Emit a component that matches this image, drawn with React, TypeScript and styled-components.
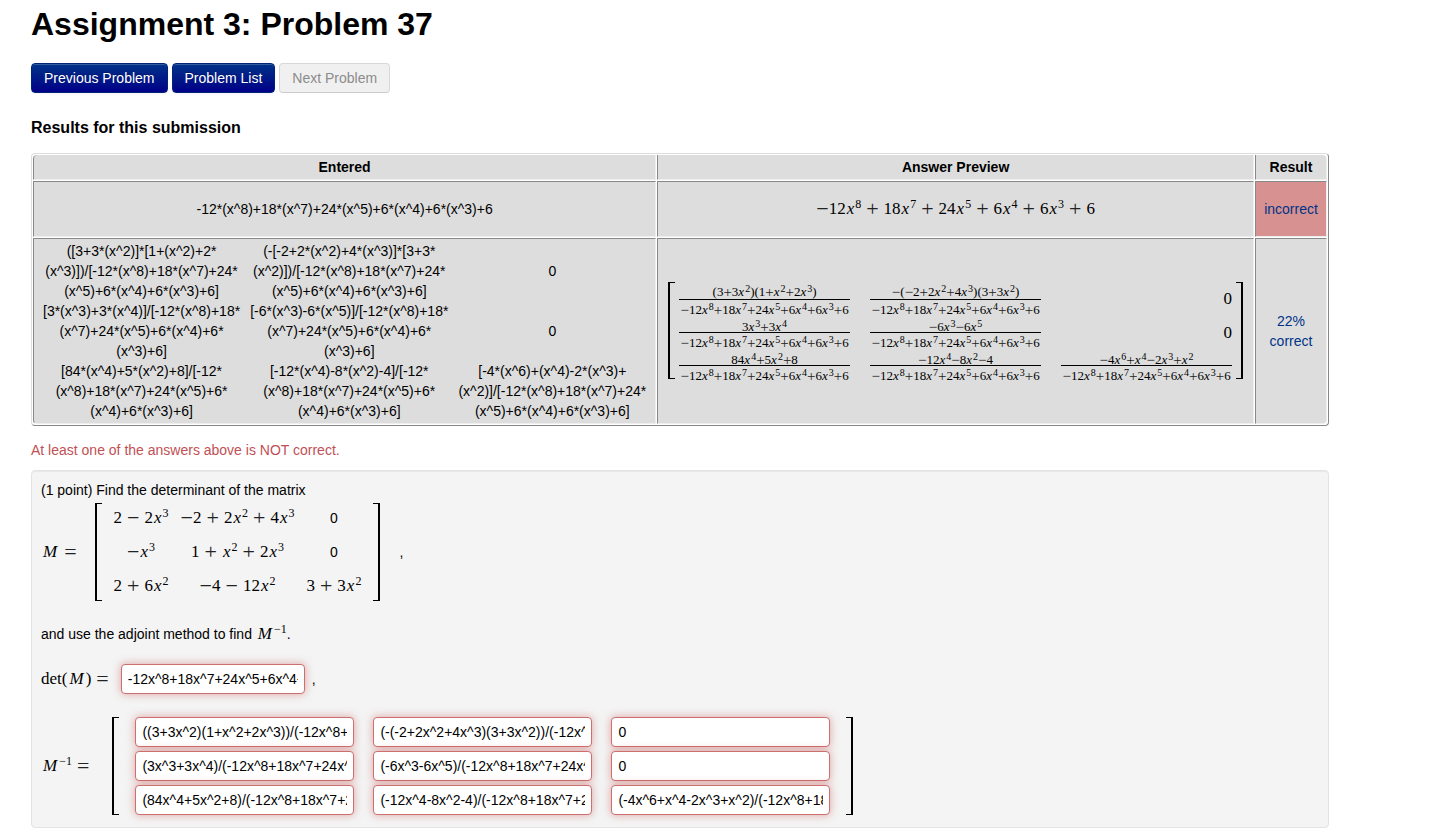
import React, { Fragment } from "react";
import styled, { createGlobalStyle } from "styled-components";

const GlobalStyle = createGlobalStyle`
  * { box-sizing: border-box; }
  body {
    margin: 0;
    background: #fff;
    color: #000;
    font: 14px/20px "Liberation Sans", Arial, Helvetica, sans-serif;
  }
`;

const Page = styled.main`
  padding: 4px 111px 12px 31px;
`;

const Title = styled.h1`
  margin: 0;
  font-size: 32px;
  line-height: 40px;
`;

const ButtonBar = styled.nav`
  display: flex;
  gap: 4px;
  margin: 19px 0 25px;
`;

const NavButton = styled.button`
  height: 30px;
  padding: 4px 12px;
  border: 1px solid #002277;
  border-radius: 4px;
  background: linear-gradient(#003388, #000088);
  box-shadow: inset 0 1px 0 rgba(255, 255, 255, 0.2), 0 1px 2px rgba(0, 0, 0, 0.05);
  color: #fff;
  font: inherit;
  text-shadow: 0 -1px 0 rgba(0, 0, 0, 0.25);

  &:disabled {
    border-color: #d8d8d8 #d8d8d8 #cccccc;
    background: #f0f0f0;
    box-shadow: none;
    color: #8c8c8c;
    text-shadow: none;
  }
`;

const SectionTitle = styled.h2`
  margin: 0 0 15px;
  font-size: 16px;
  line-height: 20px;
`;

const Results = styled.table`
  width: 100%;
  border: 1px solid;
  border-color: #ddd #888 #888 #ddd;
  border-radius: 4px;
  border-spacing: 1px;
  border-collapse: separate;
  text-align: center;

  thead th:first-child { border-top-left-radius: 4px; }
  thead th:last-child { border-top-right-radius: 4px; }
  > tbody > tr:last-child > td:first-child { border-bottom-left-radius: 4px; }
  > tbody > tr:last-child > td:last-child { border-bottom-right-radius: 4px; }
`;

const HeadCell = styled.th`
  height: 25px;
  padding: 2px 4px;
  border: 1px solid;
  border-color: #ddd #eee #eee #888;
  border-top: 0;
  background: #ddd;
`;

const Cell = styled.td<{ $wrong?: boolean; $height?: number }>`
  height: ${(p) => (p.$height ? `${p.$height}px` : "auto")};
  padding: 2px 4px;
  border: 1px solid;
  border-color: #888 #eee #eee #888;
  background: ${(p) => (p.$wrong ? "#d69190" : "#ddd")};
`;

const EnteredCol = styled.col`
  width: 623px;
`;

const ResultCol = styled.col`
  width: 72px;
`;

const ResultLink = styled.a`
  color: #003388;
  text-decoration: none;
`;

const EnteredGrid = styled.table`
  width: 100%;
  border-spacing: 0;
  td {
    padding: 0 5px;
    white-space: nowrap;
  }
`;

const Warning = styled.p`
  margin: 14px 0 10px;
  color: #bf5055;
`;

const Panel = styled.section`
  padding: 9px 9px 12px;
  border: 1px solid #e3e3e3;
  border-radius: 4px;
  background: #f4f4f4;
  box-shadow: inset 0 1px 1px rgba(0, 0, 0, 0.05);
`;

const Line = styled.p`
  margin: 0;
`;

const MathRow = styled.div<{ $gap: number }>`
  display: flex;
  align-items: center;
  gap: ${(p) => p.$gap}px;
`;

const MatrixRow = styled(MathRow)`
  margin: 1px 0;
`;

const Matrix = styled.div<{ $pad: number }>`
  display: flex;
  align-items: stretch;
  gap: ${(p) => p.$pad}px;
`;

const Bracket = styled.span<{ $right?: boolean; $inset?: string }>`
  width: 7px;
  margin: ${(p) => p.$inset ?? "0"};
  border: solid #000;
  border-width: ${(p) => (p.$right ? "1px 2px 1px 0" : "1px 0 1px 2px")};
`;

const MatrixGrid = styled.table`
  border-spacing: 0;
  td {
    height: 34px;
    padding: 0 6px;
    text-align: center;
  }
`;

const InputGrid = styled.div`
  display: grid;
  grid-template-columns: repeat(3, 219px);
  gap: 4px 19px;
`;

const PreviewBox = styled.div`
  display: flex;
  justify-content: center;
  padding-top: 2px;
`;

const Expr = styled.span<{ $small?: boolean }>`
  font-family: "Liberation Serif", "Times New Roman", serif;
  font-size: ${(p) => (p.$small ? 13 : 17)}px;
  line-height: ${(p) => (p.$small ? 16 : 20)}px;
  white-space: nowrap;

  sup {
    margin-left: ${(p) => (p.$small ? 1 : 0)}px;
    font-size: ${(p) => (p.$small ? 10 : 12)}px;
    line-height: 0;
    vertical-align: ${(p) => (p.$small ? 4 : 6)}px;
  }
`;

const Variable = styled.i<{ $space: number }>`
  margin: 0 ${(p) => p.$space}px;
`;

const Op = styled.span<{ $small?: boolean; $unary?: boolean }>`
  margin: 0 ${(p) => (p.$small || p.$unary ? 0 : 5)}px;
  color: #222;
  font-size: ${(p) => (p.$small ? 15 : 22)}px;
  line-height: 0;
  vertical-align: ${(p) => (p.$small ? -1 : -2)}px;
`;

const Comma = styled.span<{ $indent?: boolean }>`
  padding-left: ${(p) => (p.$indent ? 6 : 0)}px;
`;

const Fraction = styled.span`
  display: inline-flex;
  flex-direction: column;
  width: 171px;
  text-align: center;
  vertical-align: top;
`;

const Numerator = styled.span`
  height: 16px;
  border-bottom: 1px solid #000;
  line-height: 18px;
`;

const Denominator = styled.span`
  height: 17px;
  line-height: 18px;
`;

const PreviewGrid = styled.table`
  border-spacing: 0;
  td {
    padding: 0 20px 0 0;
    text-align: right;
  }
  td:last-child {
    padding: 0;
  }
  tr:first-child ${Numerator} {
    height: 18px;
  }
`;

const Answer = styled.input<{ $wide?: boolean }>`
  width: ${(p) => (p.$wide ? "219px" : "184px")};
  height: 30px;
  padding: 4px 6px;
  border: 1px solid #cb6f6f;
  border-radius: 4px;
  outline: none;
  background: #fff;
  box-shadow: 0 0 8px rgba(200, 80, 80, 0.5);
  color: #000;
  font: inherit;
`;

const DetRow = styled(MathRow)`
  margin: 20px 0 23px;
`;

/** Typesets a plain polynomial such as "-12x^8+18x^7". */
function Tex({ src, small }: { src: string; small?: boolean }) {
  const tokens = src.match(/\^-?\d+|det|[A-Za-z]|\d+|./g) ?? [];
  return (
    <Expr $small={small}>
      {tokens.map((t, i) => {
        if (t[0] === "^") return <sup key={i}>{t.slice(1).replace("-", "−")}</sup>;
        if (/^[a-zA-Z]$/.test(t)) {
          const space = small ? 0 : t === "M" ? 2 : 1;
          return <Variable key={i} $space={space}>{t}</Variable>;
        }
        if (/^[-+=]$/.test(t)) {
          const unary = i === 0 || tokens[i - 1] === "(";
          return <Op key={i} $small={small} $unary={unary}>{t === "-" ? "−" : t}</Op>;
        }
        return <Fragment key={i}>{t}</Fragment>;
      })}
    </Expr>
  );
}

const DET = "-12x^8+18x^7+24x^5+6x^4+6x^3+6";

const entered: string[][][] = [
  [
    ["([3+3*(x^2)]*[1+(x^2)+2*", "(x^3)])/[-12*(x^8)+18*(x^7)+24*", "(x^5)+6*(x^4)+6*(x^3)+6]"],
    ["(-[-2+2*(x^2)+4*(x^3)]*[3+3*", "(x^2)])/[-12*(x^8)+18*(x^7)+24*", "(x^5)+6*(x^4)+6*(x^3)+6]"],
    ["0"],
  ],
  [
    ["[3*(x^3)+3*(x^4)]/[-12*(x^8)+18*", "(x^7)+24*(x^5)+6*(x^4)+6*", "(x^3)+6]"],
    ["[-6*(x^3)-6*(x^5)]/[-12*(x^8)+18*", "(x^7)+24*(x^5)+6*(x^4)+6*", "(x^3)+6]"],
    ["0"],
  ],
  [
    ["[84*(x^4)+5*(x^2)+8]/[-12*", "(x^8)+18*(x^7)+24*(x^5)+6*", "(x^4)+6*(x^3)+6]"],
    ["[-12*(x^4)-8*(x^2)-4]/[-12*", "(x^8)+18*(x^7)+24*(x^5)+6*", "(x^4)+6*(x^3)+6]"],
    ["[-4*(x^6)+(x^4)-2*(x^3)+", "(x^2)]/[-12*(x^8)+18*(x^7)+24*", "(x^5)+6*(x^4)+6*(x^3)+6]"],
  ],
];

const preview = [
  ["(3+3x^2)(1+x^2+2x^3)", "-(-2+2x^2+4x^3)(3+3x^2)", "0"],
  ["3x^3+3x^4", "-6x^3-6x^5", "0"],
  ["84x^4+5x^2+8", "-12x^4-8x^2-4", "-4x^6+x^4-2x^3+x^2"],
];

const matrixM = [
  ["2-2x^3", "-2+2x^2+4x^3", "0"],
  ["-x^3", "1+x^2+2x^3", "0"],
  ["2+6x^2", "-4-12x^2", "3+3x^2"],
];

const inverse = [
  [`((3+3x^2)(1+x^2+2x^3))/(${DET})`, `(-(-2+2x^2+4x^3)(3+3x^2))/(${DET})`, "0"],
  [`(3x^3+3x^4)/(${DET})`, `(-6x^3-6x^5)/(${DET})`, "0"],
  [`(84x^4+5x^2+8)/(${DET})`, `(-12x^4-8x^2-4)/(${DET})`, `(-4x^6+x^4-2x^3+x^2)/(${DET})`],
];

export default function App() {
  return (
    <Page>
      <GlobalStyle />
      <Title>Assignment 3: Problem 37</Title>
      <ButtonBar>
        <NavButton type="button">Previous Problem</NavButton>
        <NavButton type="button">Problem List</NavButton>
        <NavButton type="button" disabled>Next Problem</NavButton>
      </ButtonBar>

      <SectionTitle>Results for this submission</SectionTitle>
      <Results>
        <colgroup>
          <EnteredCol />
          <col />
          <ResultCol />
        </colgroup>
        <thead>
          <tr>
            <HeadCell>Entered</HeadCell>
            <HeadCell>Answer Preview</HeadCell>
            <HeadCell>Result</HeadCell>
          </tr>
        </thead>
        <tbody>
          <tr>
            <Cell $height={56}>-12*(x^8)+18*(x^7)+24*(x^5)+6*(x^4)+6*(x^3)+6</Cell>
            <Cell><Tex src={DET} /></Cell>
            <Cell $wrong><ResultLink href="#answer-det">incorrect</ResultLink></Cell>
          </tr>
          <tr>
            <Cell>
              <EnteredGrid>
                <tbody>
                  {entered.map((row, r) => (
                    <tr key={r}>
                      {row.map((lines, c) => (
                        <td key={c}>
                          {lines.map((line, i) => (
                            <Fragment key={i}>{i > 0 && <br />}{line}</Fragment>
                          ))}
                        </td>
                      ))}
                    </tr>
                  ))}
                </tbody>
              </EnteredGrid>
            </Cell>
            <Cell>
              <PreviewBox>
                <Matrix $pad={4}>
                  <Bracket $inset="0 0 4px" />
                  <PreviewGrid>
                    <tbody>
                      {preview.map((row, r) => (
                        <tr key={r}>
                          {row.map((num, c) => (
                            <td key={c}>
                              {num === "0" ? (
                                <Tex src="0" />
                              ) : (
                                <Fraction>
                                  <Numerator><Tex small src={num} /></Numerator>
                                  <Denominator><Tex small src={DET} /></Denominator>
                                </Fraction>
                              )}
                            </td>
                          ))}
                        </tr>
                      ))}
                    </tbody>
                  </PreviewGrid>
                  <Bracket $inset="0 0 4px" $right />
                </Matrix>
              </PreviewBox>
            </Cell>
            <Cell><ResultLink href="#answer-0-0">22% correct</ResultLink></Cell>
          </tr>
        </tbody>
      </Results>

      <Warning>At least one of the answers above is NOT correct.</Warning>

      <Panel>
        <Line>(1 point) Find the determinant of the matrix</Line>
        <MatrixRow $gap={13}>
          <Tex src="M=" />
          <Matrix $pad={6}>
            <Bracket $inset="2px 0" />
            <MatrixGrid>
              <tbody>
                {matrixM.map((row, r) => (
                  <tr key={r}>
                    {row.map((v, c) => <td key={c}>{v === "0" ? v : <Tex src={v} />}</td>)}
                  </tr>
                ))}
              </tbody>
            </MatrixGrid>
            <Bracket $inset="2px 0" $right />
          </Matrix>
          <Comma $indent>,</Comma>
        </MatrixRow>
        <br />
        <Line>and use the adjoint method to find <Tex src="M^-1" />.</Line>
        <DetRow $gap={7}>
          <label htmlFor="answer-det"><Tex src="det(M)=" /></label>
          <Answer id="answer-det" defaultValue={DET} />
          <Comma>,</Comma>
        </DetRow>
        <MathRow $gap={18}>
          <Tex src="M^-1=" />
          <Matrix $pad={16}>
            <Bracket />
            <InputGrid>
              {inverse.map((row, r) =>
                row.map((v, c) => (
                  <Answer
                    key={`${r}-${c}`}
                    id={`answer-${r}-${c}`}
                    $wide
                    aria-label={`Inverse matrix row ${r + 1} column ${c + 1}`}
                    defaultValue={v}
                  />
                ))
              )}
            </InputGrid>
            <Bracket $right />
          </Matrix>
        </MathRow>
      </Panel>
    </Page>
  );
}
